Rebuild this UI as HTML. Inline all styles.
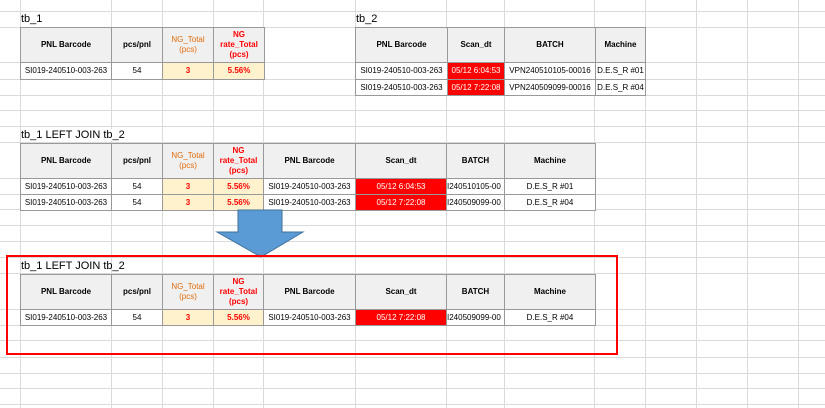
<!DOCTYPE html>
<html><head><meta charset="utf-8"><style>
body{margin:0;width:825px;height:408px;background:#fff;position:relative;overflow:hidden;font-family:"Liberation Sans",Arial,sans-serif}
.h{position:absolute;left:0;width:825px;height:1px;background:#dadada}
.v{position:absolute;top:0;height:408px;width:1px;background:#dadada}
table{position:absolute;border-collapse:collapse;table-layout:fixed;background:#fff}
td{border:1px solid #999;font-size:8px;text-align:center;padding:0;white-space:nowrap;overflow:hidden;line-height:10px;color:#000}
tr.hd td{background:#f0f0f0;font-weight:bold}
td.o{background:#fff2cc;color:#ff0000;font-weight:bold}
tr.hd td.og{color:#e26b0a;font-weight:normal;background:#f0f0f0}
tr.hd td.rd{color:#ff0000}
td.r{background:#ff0000;color:#fff}
.t{position:absolute;font-size:11px;color:#000}
</style></head><body>
<div class="h" style="top:11px"></div><div class="h" style="top:27px"></div><div class="h" style="top:62px"></div><div class="h" style="top:79px"></div><div class="h" style="top:95px"></div><div class="h" style="top:110px"></div><div class="h" style="top:126px"></div><div class="h" style="top:142px"></div><div class="h" style="top:178px"></div><div class="h" style="top:194px"></div><div class="h" style="top:209px"></div><div class="h" style="top:225px"></div><div class="h" style="top:241px"></div><div class="h" style="top:257px"></div><div class="h" style="top:273px"></div><div class="h" style="top:309px"></div><div class="h" style="top:325px"></div><div class="h" style="top:340px"></div><div class="h" style="top:357px"></div><div class="h" style="top:373px"></div><div class="h" style="top:388px"></div><div class="h" style="top:404px"></div>
<div class="v" style="left:20px"></div><div class="v" style="left:111px"></div><div class="v" style="left:162px"></div><div class="v" style="left:213px"></div><div class="v" style="left:263px"></div><div class="v" style="left:355px"></div><div class="v" style="left:446px"></div><div class="v" style="left:504px"></div><div class="v" style="left:594px"></div><div class="v" style="left:645px"></div><div class="v" style="left:696px"></div><div class="v" style="left:747px"></div><div class="v" style="left:798px"></div>

<div class="t" style="left:21px;top:13px;background:#fff">tb_1</div>
<table style="left:20px;top:27px;width:244px">
<colgroup><col style="width:91px"><col style="width:51px"><col style="width:51px"><col style="width:51px"></colgroup>
<tr class="hd" style="height:35px"><td>PNL Barcode</td><td>pcs/pnl</td><td class="og">NG_Total<br>(pcs)</td><td class="rd">NG<br>rate_Total<br>(pcs)</td></tr>
<tr style="height:17px"><td>SI019-240510-003-263</td><td>54</td><td class="o">3</td><td class="o">5.56%</td></tr>
</table>

<div class="t" style="left:356px;top:13px;background:#fff">tb_2</div>
<table style="left:355px;top:27px;width:290px">
<colgroup><col style="width:92px"><col style="width:57px"><col style="width:91px"><col style="width:50px"></colgroup>
<tr class="hd" style="height:35px"><td>PNL Barcode</td><td>Scan_dt</td><td>BATCH</td><td>Machine</td></tr>
<tr style="height:17px"><td>SI019-240510-003-263</td><td class="r">05/12 6:04:53</td><td>VPN240510105-00016</td><td>D.E.S_R #01</td></tr>
<tr style="height:16px"><td>SI019-240510-003-263</td><td class="r">05/12 7:22:08</td><td>VPN240509099-00016</td><td>D.E.S_R #04</td></tr>
</table>

<div class="t" style="left:21px;top:129px;background:#fff">tb_1 LEFT JOIN tb_2</div>
<table style="left:20px;top:143px;width:575px">
<colgroup><col style="width:91px"><col style="width:51px"><col style="width:51px"><col style="width:50px"><col style="width:92px"><col style="width:91px"><col style="width:58px"><col style="width:91px"></colgroup>
<tr class="hd" style="height:35px"><td>PNL Barcode</td><td>pcs/pnl</td><td class="og">NG_Total<br>(pcs)</td><td class="rd">NG<br>rate_Total<br>(pcs)</td><td>PNL Barcode</td><td>Scan_dt</td><td>BATCH</td><td>Machine</td></tr>
<tr style="height:16px"><td>SI019-240510-003-263</td><td>54</td><td class="o">3</td><td class="o">5.56%</td><td>SI019-240510-003-263</td><td class="r">05/12 6:04:53</td><td style="text-align:left">I240510105-00</td><td>D.E.S_R #01</td></tr>
<tr style="height:16px"><td>SI019-240510-003-263</td><td>54</td><td class="o">3</td><td class="o">5.56%</td><td>SI019-240510-003-263</td><td class="r">05/12 7:22:08</td><td style="text-align:left">I240509099-00</td><td>D.E.S_R #04</td></tr>
</table>

<svg style="position:absolute;left:0;top:0" width="825" height="408"><polygon points="238,210 282,210 282,232 303,232 261,257 217,232 238,232" fill="#5b9bd5" stroke="#41719c" stroke-width="1"/></svg>

<div style="position:absolute;left:6px;top:255px;width:608px;height:96px;border:2px solid #ff0000"></div>
<div class="t" style="left:21px;top:260px">tb_1 LEFT JOIN tb_2</div>
<table style="left:20px;top:274px;width:575px">
<colgroup><col style="width:91px"><col style="width:51px"><col style="width:51px"><col style="width:50px"><col style="width:92px"><col style="width:91px"><col style="width:58px"><col style="width:91px"></colgroup>
<tr class="hd" style="height:35px"><td>PNL Barcode</td><td>pcs/pnl</td><td class="og">NG_Total<br>(pcs)</td><td class="rd">NG<br>rate_Total<br>(pcs)</td><td>PNL Barcode</td><td>Scan_dt</td><td>BATCH</td><td>Machine</td></tr>
<tr style="height:16px"><td>SI019-240510-003-263</td><td>54</td><td class="o">3</td><td class="o">5.56%</td><td>SI019-240510-003-263</td><td class="r">05/12 7:22:08</td><td style="text-align:left">I240509099-00</td><td>D.E.S_R #04</td></tr>
</table>
</body></html>
